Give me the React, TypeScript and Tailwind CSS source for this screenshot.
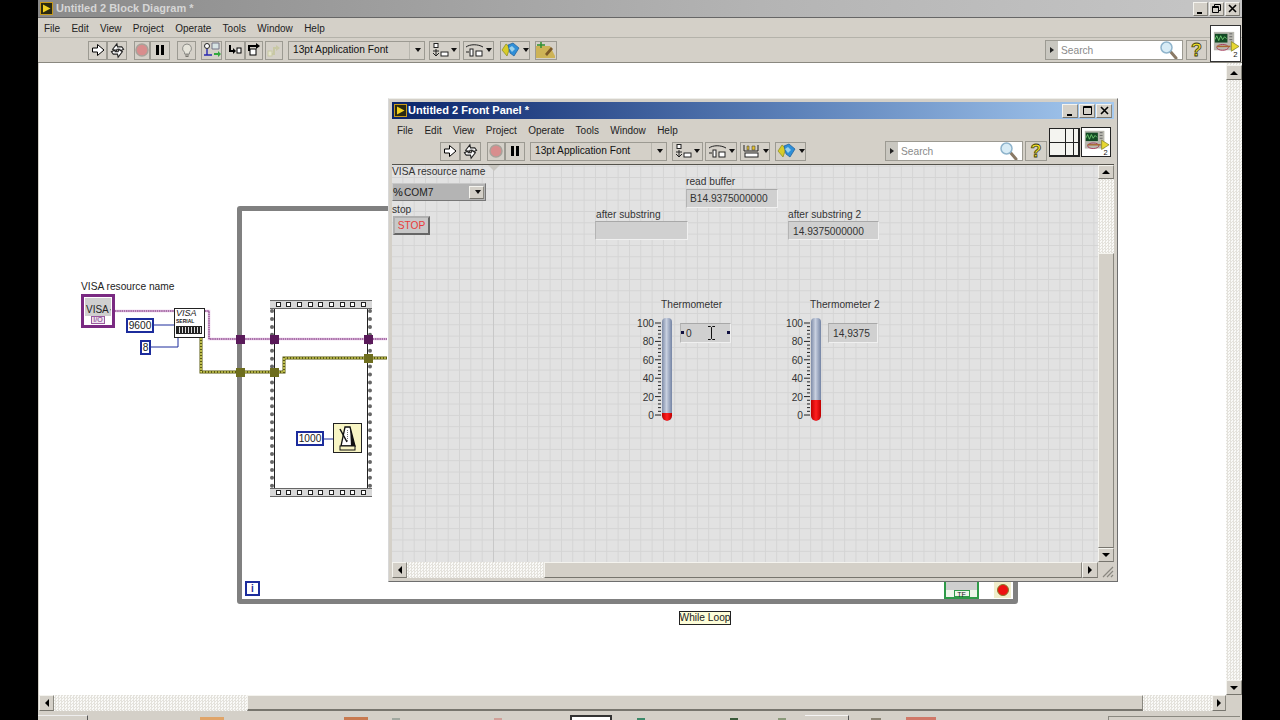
import React from "react";

const raised = "border border-t-[#f4f3ee] border-l-[#f4f3ee] border-r-[#8a8880] border-b-[#77756e] bg-[#d4d0c8]";
const sunken = "border border-t-[#a8a8a8] border-l-[#b4b4b4] border-r-[#f0f0f0] border-b-[#f0f0f0] bg-[#d0d0d0]";
const dither = "bg-[repeating-conic-gradient(#e4e2dc_0_25%,#fafaf8_0_50%)] bg-[length:3px_3px]";

function Btn({ className = "", children }: { className?: string; children?: React.ReactNode }) {
  return <div className={`h-[19px] shrink-0 flex items-center justify-center border border-[#9c9a92] bg-[#d4d0c8] ${className}`}>{children}</div>;
}

const I = ({ children, w = 14, h = 14 }: { children: React.ReactNode; w?: number; h?: number }) => (
  <svg width={w} height={h} viewBox={`0 0 ${w} ${h}`}>{children}</svg>
);

const Run = () => <I><path d="M1.500 5h5V1.500L13 7l-6.500 5.500V9h-5z" fill="#fff" stroke="#000" /></I>;
const Cycle = () => (
  <svg width="17" height="17" viewBox="0 0 14 14">
    <path d="M3 6 6.500 1.500 7 4h3.500L12 6 9 7.500V6H6.500L6 8z" fill="#fff" stroke="#222" strokeWidth=".9" />
    <path d="M11 8 7.500 12.500 7 10H3.500L2 8l3-1.500V8h2.500L8 6z" fill="#fff" stroke="#222" strokeWidth=".9" />
  </svg>
);
const Abort = () => <I><circle cx="7" cy="7" r="6" fill="#d88d8d" stroke="#a8a29a" strokeWidth="1.500" /></I>;
const Pause = () => <I><path d="M3 2h3v10H3zM8 2h3v10H8z" fill="#000" /></I>;
const Bulb = () => (
  <I>
    <path d="M7 1a4.500 4.500 0 0 0-2.500 8.200V11h5V9.200A4.500 4.500 0 0 0 7 1z" fill="#e6e4da" stroke="#8d8d88" />
    <path d="M5 12h4M5.500 13.500h3" stroke="#77756e" />
  </I>
);
const Probe = () => (
  <I w={18} h={16}>
    <circle cx="4" cy="4" r="2.500" fill="#fff" stroke="#222" />
    <path d="M9 1h7v6H9z" fill="#d8e4e4" stroke="#778" />
    <path d="M4 7v6M1 13h8" stroke="#2a2ab0" strokeWidth="1.400" />
    <path d="M11 11h4V9l3 3-3 3v-2h-4z" fill="#32a83c" />
  </I>
);
const StepIn = () => <I><path d="M2 2v6h4" fill="none" stroke="#000" strokeWidth="2" /><path d="M5 5l3 3-3 3z" fill="#000" /><rect x="9" y="5" width="4" height="5" fill="#fff" stroke="#000" /></I>;
const StepOver = () => <I><path d="M2 8V3h7" fill="none" stroke="#000" strokeWidth="2" /><path d="M9 0l4 3-4 3z" fill="#000" /><rect x="3" y="6" width="6" height="6" fill="#fff" stroke="#000" /></I>;
const StepOut = () => <I><path d="M3 11h4V5h3" fill="none" stroke="#c8c8a4" strokeWidth="2" /><path d="M9 2l4 3-4 3z" fill="#c8c8a4" /><rect x="1" y="8" width="4" height="5" fill="#e4e4cc" stroke="#c8c8a4" /></I>;
const Caret = () => <svg width="6" height="4" viewBox="0 0 6 4" className="ml-[2px]"><path d="M0 0h6L3 4z" fill="#111" /></svg>;
const Align = () => (
  <I w={17} h={15}>
    <rect x="2" y="0.500" width="4" height="4" fill="#fff" stroke="#222" />
    <path d="M4 6v6M1 8h6" stroke="#222" />
    <path d="M1 10l3 3 3-3" fill="none" stroke="#222" />
    <rect x="9" y="9" width="7" height="4" fill="#fff" stroke="#222" />
  </I>
);
const Dist = () => (
  <I w={19} h={15}>
    <path d="M1 4c4-3 12-3 17 0" fill="none" stroke="#222" />
    <rect x="5" y="6" width="3" height="7" fill="#fff" stroke="#222" />
    <rect x="11" y="8" width="6" height="5" fill="#fff" stroke="#222" />
    <path d="M1 9h3" stroke="#222" />
  </I>
);
const Resize = () => (
  <I w={19} h={15}>
    <path d="M2 1v6h14V1" fill="none" stroke="#222" />
    <path d="M5 2h2v4H5zM10 2h3v4h-3z" fill="#e6c22c" stroke="#444" strokeWidth=".6" />
    <rect x="3" y="9" width="13" height="4" fill="#fff" stroke="#222" />
  </I>
);
const Reorder = () => (
  <I w={20} h={16}>
    <path d="M1 8 5 2l4 3-3 9z" fill="#d8cc2a" stroke="#888a20" strokeWidth=".7" />
    <path d="M7 3l5-2 6 5-5 8-4-3z" fill="#2f8fd8" stroke="#1a5c98" strokeWidth=".7" />
    <path d="M8 6l3-2 3 3-3 3z" fill="#9ad0ea" />
  </I>
);
const Env = () => (
  <I w={20} h={16}>
    <path d="M0 4h14l5 10v2H0z" fill="#cdb356" />
    <path d="M1 3h8M5 0v6" stroke="#2f8f2f" strokeWidth="1.500" />
    <path d="M9 12l6-7 2 2-6 7z" fill="#7c5a28" />
  </I>
);
const Lens = () => (
  <svg width="20" height="18" viewBox="0 0 20 18">
    <path d="M11 10l6 7" stroke="#8a7a66" strokeWidth="3" strokeLinecap="round" />
    <circle cx="7.500" cy="6.500" r="5.500" fill="#d8ecf6" stroke="#8fb4cc" strokeWidth="1.500" />
  </svg>
);

function Search({ className = "" }: { className?: string }) {
  return (
    <div className={`h-[20px] w-[138px] shrink-0 flex border border-[#9c9a92] ${className}`}>
      <div className="w-[12px] flex items-center justify-center bg-[#c9c7c0]">
        <svg width="4" height="6" viewBox="0 0 4 6"><path d="M0 0l4 3-4 3z" fill="#222" /></svg>
      </div>
      <div className="flex-1 bg-white flex items-center pl-[3px] text-[#8a8a8a]">
        <span className="flex-1 pt-[2px]">Search</span>
        <Lens />
        <span className="w-[3px]" />
      </div>
    </div>
  );
}
const Help = ({ className = "" }: { className?: string }) => (
  <Btn className={`h-[20px] ${className}`}>
    <span className="font-bold text-[18px] leading-none text-[#f2e024] [-webkit-text-stroke:0.8px_#3a3a10]">?</span>
  </Btn>
);
const FontRing = () => (
  <div className="h-[19px] w-[137px] shrink-0 flex items-center border border-[#9c9a92] pl-[4px]">
    <span className="flex-1 text-[#111] pb-px">13pt Application Font</span>
    <span className="w-[15px] h-full border-l border-[#b8b6ae] flex items-center justify-center"><Caret /></span>
  </div>
);
function Menu({ className = "" }: { className?: string }) {
  return (
    <div className={`flex items-center gap-[11.3px] text-[#222] text-[10px] ${className}`}>
      {["File", "Edit", "View", "Project", "Operate", "Tools", "Window", "Help"].map((m) => <span key={m}>{m}</span>)}
    </div>
  );
}
const LvLogo = () => (
  <svg width="13" height="13" viewBox="0 0 13 13" className="shrink-0">
    <rect width="13" height="13" fill="#c79a1a" />
    <rect x="1" y="1" width="11" height="11" fill="#2a2a10" />
    <path d="M3 2.500 10.500 6.500 3 10.500z" fill="#f0d020" />
  </svg>
);
const VIcon = ({ w, h }: { w: number; h: number }) => (
  <svg width={w} height={h} viewBox="0 0 30 30">
    <rect width="30" height="30" fill="#fff" />
    <rect x="3" y="3" width="21" height="19" fill="#b8b8b0" />
    <rect x="4" y="5" width="13" height="9" fill="#124a24" />
    <path d="M4 11l2-4 2 5 2-5 2 4 2-3 2 2" fill="none" stroke="#7fe07f" strokeWidth=".8" />
    <path d="M19 5h3M19 8h3M19 11h3" stroke="#666" />
    <ellipse cx="12" cy="19" rx="6" ry="3" fill="none" stroke="#a83a5c" />
    <path d="M6 18h14" stroke="#a8662c" strokeWidth="1.500" />
    <path d="M21 13l8 5-8 5z" fill="#e8d832" stroke="#7a7a1a" strokeWidth=".7" />
    <text x="23" y="29" fontSize="8" fill="#111" fontFamily="Liberation Sans, sans-serif">2</text>
  </svg>
);
const ScrollBtn = ({ d, className = "" }: { d: string; className?: string }) => (
  <div className={`${raised} shrink-0 flex items-center justify-center ${className}`}>
    <svg width="8" height="8" viewBox="0 0 8 8"><path d={d} fill="#000" /></svg>
  </div>
);
const UP = "M0 6h8L4 2z", DOWN = "M0 2h8L4 6z", LEFT = "M6 0v8L2 4z", RIGHT = "M2 0v8l4-4z";

function Thermo({ left, value, fill, boxLeft, handles }: { left: string; value: string; fill: string; boxLeft: string; handles?: boolean }) {
  const ticks: React.ReactNode[] = [];
  for (let i = 0; i <= 25; i++) {
    const y = 6 + (i * 92) / 25;
    ticks.push(<path key={i} d={`M${i % 5 === 0 ? 0 : 3} ${y}H6`} stroke="#222" strokeWidth="1" />);
  }
  return (
    <div className={`absolute top-[152px] flex ${left}`}>
      <div className="w-[18px] h-[104px] translate-y-px flex flex-col justify-between items-end leading-[12px] text-[#333]">
        {["100", "80", "60", "40", "20", "0"].map((n) => <span key={n}>{n}</span>)}
      </div>
      <svg width="7" height="104" viewBox="0 0 7 104" className="ml-px">{ticks}</svg>
      <div className="mt-px w-[10px] h-[103px] rounded-t-[4px] rounded-b-[5px] overflow-hidden flex flex-col justify-end bg-[linear-gradient(90deg,#7e8ca8,#c8d0e0_45%,#7484a4)]">
        <div className={`${fill} rounded-b-[5px] bg-[linear-gradient(90deg,#c00000,#ff2020_50%,#c00000)]`} />
      </div>
      <div className={`relative mt-[6px] h-[20px] w-[50px] ${sunken} flex items-center ${boxLeft}`}>
        <span className="text-[#333] pt-[2px]">{value}</span>
        {handles && <span className="absolute left-0 top-[7px] w-[3px] h-[3px] bg-[#101040]" />}
        {handles && <span className="absolute right-0 top-[7px] w-[3px] h-[3px] bg-[#101040]" />}
        {handles && (
          <svg width="9" height="14" viewBox="0 0 9 14" className="absolute left-[26px] top-[2px]">
            <path d="M1 .5h2.500L4.500 1.500 5.500.5H8M4.500 1.500v11M1 13.500h2.500l1-1 1 1H8" fill="none" stroke="#111" />
          </svg>
        )}
      </div>
    </div>
  );
}

const Lbl = ({ className, children }: { className: string; children: React.ReactNode }) => (
  <span className={`absolute leading-[12px] whitespace-nowrap text-[#333] ${className}`}>{children}</span>
);

const Strip = () => (
  <div className="h-[9px] flex items-center justify-around px-[3px] border-y border-[#666] bg-[#d8d8d8]">
    {Array.from({ length: 9 }).map((_, i) => <span key={i} className="w-[5px] h-[5px] border border-[#222] bg-white" />)}
  </div>
);

function FrontPanel() {
  return (
    <div className="absolute left-[349px] top-[35px] w-[730px] h-[484px] p-[3px] flex flex-col bg-[#d4d0c8] border border-t-[#eeeeea] border-l-[#d8d8d8] border-r-[#6e6e6e] border-b-[#6e6e6e]">
      <div className="h-[17px] shrink-0 flex items-center pl-[2px] text-[11px] bg-[linear-gradient(90deg,#0a246a,#5b80b8_55%,#a6caf0)]">
        <LvLogo />
        <span className="ml-px font-bold text-white">Untitled 2 Front Panel *</span>
        <div className="ml-auto flex gap-px pr-[2px]">
          {[
            <path key="a" d="M2 9h5v2H2z" fill="#000" />,
            <path key="b" d="M1.500 1.500h8v8h-8zM1.500 2.500h8" fill="none" stroke="#000" />,
            <path key="c" d="M2 2l7 7M9 2l-7 7" stroke="#000" strokeWidth="1.600" />,
          ].map((p, i) => (
            <div key={i} className={`${raised} w-[16px] h-[14px] flex items-center justify-center`}>
              <svg width="11" height="11" viewBox="0 0 11 11">{p}</svg>
            </div>
          ))}
        </div>
      </div>
      <Menu className="h-[21px] shrink-0 pl-[5px] pt-[2px]" />
      <div className="relative h-[25px] shrink-0 flex items-center pl-[48px] pb-[2px] border-b border-[#55534c]">
        <Btn className="w-[20px]"><Run /></Btn>
        <Btn className="w-[21px]"><Cycle /></Btn>
        <Btn className="w-[18px] ml-[6px]"><Abort /></Btn>
        <Btn className="w-[20px]"><Pause /></Btn>
        <div className="ml-[5px]"><FontRing /></div>
        <Btn className="w-[31px] ml-[5px]"><Align /><Caret /></Btn>
        <Btn className="w-[32px] ml-[2px]"><Dist /><Caret /></Btn>
        <Btn className="w-[30px] ml-[3px]"><Resize /><Caret /></Btn>
        <Btn className="w-[31px] ml-[5px]"><Reorder /><Caret /></Btn>
        <Search className="ml-[79px]" />
        <Help className="w-[22px] ml-[2px]" />
        <div className="absolute left-[657px] top-[-12px] w-[31px] h-[29px] bg-[#f4f4f0] border border-[#222] grid grid-cols-[16px_8px_1fr] grid-rows-2">
          {Array.from({ length: 6 }).map((_, i) => <span key={i} className="border-r border-b border-[#222]" />)}
        </div>
        <div className="absolute left-[689px] top-[-13px] w-[30px] h-[30px] border border-[#222]"><VIcon w={28} h={28} /></div>
      </div>
      <div className="h-[397px] shrink-0 flex">
        <div className="relative w-[706px] bg-[#e2e2e2] bg-[linear-gradient(#d4d4d4_1px,transparent_1px),linear-gradient(90deg,#d4d4d4_1px,transparent_1px)] bg-[length:11.33px_11.33px] bg-[position:10.4px_0.7px]">
          <div className="absolute left-[101px] top-0 bottom-0 w-px bg-[#c8c8c8]" />
          <svg width="12" height="6" viewBox="0 0 12 6" className="absolute left-[96px] top-0"><path d="M0 0h12L6 6z" fill="#c8c6c0" /></svg>
          <Lbl className="left-0 top-px">VISA resource name</Lbl>
          <div className="absolute left-0 top-[18px] w-[94px] h-[18px] flex items-center bg-[#b4b4b4] border border-t-[#c8c8c8] border-l-[#cccccc] border-r-[#777] border-b-[#777]">
            <span className="w-[11px] text-[11px] leading-none text-[#111]">%</span>
            <span className="flex-1 text-[#222] pt-[2px]">COM7</span>
            <span className={`${raised} w-[15px] h-[13px] mr-px flex items-center justify-center`}><Caret /></span>
          </div>
          <Lbl className="left-0 top-[39px]">stop</Lbl>
          <div className="absolute left-px top-[51px] w-[37px] h-[19px] flex items-center justify-center bg-[#c8c8c8] border-2 border-t-[#b0b0b0] border-l-[#b0b0b0] border-r-[#666] border-b-[#666] text-[#e83a3a]">STOP</div>
          <Lbl className="left-[294px] top-[11px]">read buffer</Lbl>
          <div className={`absolute left-[294px] top-[24px] w-[92px] h-[19px] ${sunken} flex items-center pl-[3px] text-[#333]`}>B14.9375000000</div>
          <Lbl className="left-[204px] top-[44px]">after substring</Lbl>
          <div className={`absolute left-[203px] top-[56px] w-[93px] h-[19px] ${sunken}`} />
          <Lbl className="left-[396px] top-[44px]">after substring 2</Lbl>
          <div className={`absolute left-[396px] top-[56px] w-[91px] h-[19px] ${sunken} flex items-center pl-[4px] pt-[2px] text-[#333]`}>14.9375000000</div>
          <Lbl className="left-[269px] top-[134px]">Thermometer</Lbl>
          <Lbl className="left-[418px] top-[134px]">Thermometer 2</Lbl>
          <Thermo left="left-[244px]" value="0" fill="h-[8px]" boxLeft="ml-[8px] w-[51px] pl-[5px]" handles />
          <Thermo left="left-[393px]" value="14,9375" fill="h-[21px]" boxLeft="ml-[7px] pl-[4px]" />
        </div>
        <div className={`w-[16px] flex flex-col ${dither}`}>
          <ScrollBtn d={UP} className="h-[14px]" />
          <div className="h-[74px]" />
          <div className={`flex-1 ${raised}`} />
          <ScrollBtn d={DOWN} className="h-[14px]" />
        </div>
      </div>
      <div className="h-[16px] shrink-0 flex">
        <ScrollBtn d={LEFT} className="w-[15px]" />
        <div className={`w-[137px] ${dither}`} />
        <div className={`w-[538px] ${raised}`} />
        <ScrollBtn d={RIGHT} className="w-[16px]" />
        <div className="flex-1 bg-[#d4d0c8] flex items-end justify-end">
          <svg width="14" height="14" viewBox="0 0 14 14"><path d="M13 3 3 13M13 7l-6 6M13 11l-2 2" stroke="#8a8880" strokeWidth="1.200" /></svg>
        </div>
      </div>
    </div>
  );
}

function Diagram() {
  return (
    <div className="relative flex-1 bg-white overflow-hidden text-[#222]">
      <div className="absolute left-[198px] top-[143px] w-[781px] h-[398px] border-[5px] border-[#808080] rounded-[3px]" />
      <div className="absolute left-[231px] top-[237px] w-[102px] h-[197px] flex flex-col">
        <Strip />
        <div className="flex-1 border-x-[4px] border-dotted border-x-[#666]"><div className="h-full border-x border-[#222]" /></div>
        <Strip />
      </div>

      <span className="absolute left-[42px] top-[218px] leading-[12px] whitespace-nowrap">VISA resource name</span>
      <div className="absolute left-[42px] top-[231px] w-[34px] h-[34px] border-[3px] border-[#7a2a82] bg-white p-px flex flex-col">
        <div className="flex-1 bg-[#cfcfcf] flex items-center text-[10px] leading-none pt-[5px] pl-px whitespace-nowrap">VISA<svg width="4" height="4" viewBox="0 0 6 4" className="ml-px"><path d="M0 0h6L3 4z" fill="#111" /></svg></div>
        <div className="h-[8px] mx-[6px] border border-[#9a5aa0] bg-[#efe4f0] text-[7px] leading-[6px] text-center text-[#7a2a82]">I/O</div>
      </div>
      <div className="absolute left-[87px] top-[255px] w-[28px] h-[15px] pt-[2px] border-2 border-[#1c2c9c] bg-white flex items-center justify-center leading-none">9600</div>
      <div className="absolute left-[101px] top-[277px] w-[11px] h-[15px] pt-[2px] border-2 border-[#1c2c9c] bg-white flex items-center justify-center leading-none">8</div>
      <div className="absolute left-[135px] top-[245px] w-[31px] h-[30px] border border-[#222] bg-white flex flex-col pl-px">
        <span className="italic text-[9px] leading-[9px] text-[#222]">VISA</span>
        <span className="font-bold text-[5px] leading-[6px] text-[#222]">SERIAL</span>
        <span className="mt-[2px] mr-[2px] h-[8px] border border-[#222] bg-[repeating-linear-gradient(90deg,#222_0_2px,#ddd_2px_3px)]" />
      </div>
      <div className="absolute left-[257px] top-[368px] w-[28px] h-[15px] pt-[2px] border-2 border-[#1c2c9c] bg-white flex items-center justify-center leading-none">1000</div>
      <div className="absolute left-[294px] top-[360px] w-[29px] h-[30px] border border-[#222] bg-[#f8f5c4] flex items-center justify-center">
        <svg width="20" height="25" viewBox="0 0 20 25">
          <path d="M7 1h5l5 19H3z" fill="#fff" stroke="#111" strokeWidth="1.300" />
          <path d="M12 1l5 19h-4z" fill="#111" />
          <path d="M2 3l7 13" stroke="#111" strokeWidth="1.500" />
          <path d="M9.500 4v12" stroke="#777" strokeDasharray="1 1" />
          <rect x="2" y="20" width="15" height="4" fill="#f8f5c4" stroke="#111" />
        </svg>
      </div>
      <div className="absolute left-[206px] top-[518px] w-[15px] h-[15px] border-2 border-[#1c2c9c] bg-white flex items-center justify-center font-bold text-[10px] text-[#1c2c9c] leading-none">i</div>
      <div className="absolute left-[905px] top-[515px] w-[35px] h-[21px] border-2 border-[#2e9a48] bg-[#eef6ea] flex flex-col items-center justify-end">
        <span className="w-full flex-1 bg-[#cfcfcf]" />
        <span className="w-[16px] h-[7px] text-[7px] leading-[7px] text-center border border-[#2e9a48] text-[#222]">TF</span>
      </div>
      <div className="absolute left-[955px] top-[518px] w-[17px] h-[17px] bg-[#f0eecc] flex items-center justify-center">
        <span className="w-[12px] h-[12px] rounded-full bg-[#ee1111] border border-[#8a7a2a]" />
      </div>
      <div className="absolute left-[640px] top-[548px] w-[52px] h-[14px] pt-px border border-[#222] bg-[#fdfdd8] flex items-center justify-center leading-none whitespace-nowrap">While Loop</div>

      <svg width="1187" height="632" viewBox="39 63 1187 632" className="absolute left-0 top-0 pointer-events-none" fill="none">
        <path d="M115 311H174M205 311H209V339H387" stroke="#e8c8e8" strokeWidth="2.500" />
        <path d="M115 311H174M205 311H209V339H387" stroke="#6a1a6a" strokeDasharray="1.500 .7" />
        <path d="M154 325H174M151 347H178V338M324 439H333" stroke="#1c2c9c" />
        <path d="M201 338V372H284V358H387" stroke="#5a5a10" strokeWidth="3" />
        <path d="M201 338V372H284V358H387" stroke="#f8f870" strokeWidth="1.200" strokeDasharray="2 1" />
        <path d="M236 335h9v9h-9zM270 335h9v9h-9zM364 335h9v9h-9z" fill="#5a1a5a" />
        <path d="M236 368h9v9h-9zM270 368h9v9h-9zM364 354h9v9h-9z" fill="#6e6e1e" />
      </svg>
      <FrontPanel />
    </div>
  );
}

export default function App() {
  return (
    <div className="w-[1280px] h-[720px] bg-black overflow-hidden px-[38px] font-['Liberation_Sans',sans-serif] text-[10.2px]">
      <div className="relative h-full flex flex-col bg-[#d4d0c8]">
        <div className="h-[18px] shrink-0 flex items-center pl-[2px] border-b border-[#666] text-[11px] bg-[linear-gradient(90deg,#8a8a8a,#b4b4b4_60%,#c6c6c6)]">
          <LvLogo />
          <span className="ml-[3px] font-bold text-[#d6d6d6]">Untitled 2 Block Diagram *</span>
          <div className="ml-auto flex gap-px pr-[2px]">
            {[
              <path key="a" d="M2 9h5v2H2z" fill="#000" />,
              <path key="b" d="M3.500 3.500V1.500h6v6h-2M1.500 3.500h6v6h-6zM1.500 4.500h6" fill="none" stroke="#000" />,
              <path key="c" d="M2 2l7 7M9 2l-7 7" stroke="#000" strokeWidth="1.600" />,
            ].map((p, i) => (
              <div key={i} className={`${raised} w-[15px] h-[14px] flex items-center justify-center`}>
                <svg width="11" height="11" viewBox="0 0 11 11">{p}</svg>
              </div>
            ))}
          </div>
        </div>
        <Menu className="h-[20px] shrink-0 pl-[6px] pt-[2px] border-b border-[#b4b2aa]" />
        <div className="h-[25px] shrink-0 flex items-center pl-[50px] border-b border-[#8a8880]">
          <Btn className="w-[19px]"><Run /></Btn>
          <Btn className="w-[20px]"><Cycle /></Btn>
          <Btn className="w-[16px] ml-[7px]"><Abort /></Btn>
          <Btn className="w-[20px]"><Pause /></Btn>
          <Btn className="w-[19px] ml-[7px]"><Bulb /></Btn>
          <Btn className="w-[21px] ml-[5px] bg-[#c4ccd8]"><Probe /></Btn>
          <Btn className="w-[20px] ml-[3px]"><StepIn /></Btn>
          <Btn className="w-[18px]"><StepOver /></Btn>
          <Btn className="w-[18px] ml-[2px]"><StepOut /></Btn>
          <div className="ml-[5px]"><FontRing /></div>
          <Btn className="w-[31px] ml-[4px]"><Align /><Caret /></Btn>
          <Btn className="w-[31px] ml-[3px]"><Dist /><Caret /></Btn>
          <Btn className="w-[30px] ml-[6px]"><Reorder /><Caret /></Btn>
          <Btn className="w-[22px] ml-[5px]"><Env /></Btn>
          <Search className="ml-[488px]" />
          <Help className="w-[21px] ml-[3px]" />
        </div>
        <div className="absolute left-[1172px] top-[25px] w-[31px] h-[37px] border border-[#333] bg-white flex items-center justify-center">
          <VIcon w={29} h={29} />
        </div>
        <div className="h-[632px] shrink-0 flex pl-px">
          <Diagram />
          <div className={`w-[16px] flex flex-col justify-between ${dither}`}>
            <ScrollBtn d={UP} className="h-[15px] mt-[2px]" />
            <ScrollBtn d={DOWN} className="h-[15px]" />
          </div>
        </div>
        <div className="h-[16px] shrink-0 flex pl-px">
          <ScrollBtn d={LEFT} className="w-[15px]" />
          <div className={`w-[193px] ${dither}`} />
          <div className={`w-[896px] ${raised} border-b-2`} />
          <div className={`w-[69px] ${dither}`} />
          <ScrollBtn d={RIGHT} className="w-[14px]" />
        </div>
        <div className="relative h-[9px] shrink-0 flex items-end">
          <span className="absolute left-0 top-[4px] w-[50px] h-[5px] border-t border-r border-[#eee] border-r-[#555]" />
          <span className="absolute left-[162px] top-[6px] w-[24px] h-[3px] bg-[#e0a468]" />
          <span className="absolute left-[306px] top-[6px] w-[24px] h-[3px] bg-[#c87a50]" />
          <span className="absolute left-[354px] top-[7px] w-[8px] h-[2px] bg-[#a0a8a0]" />
          <span className="absolute left-[456px] top-[7px] w-[8px] h-[2px] bg-[#d0a098]" />
          <span className="absolute left-[532px] top-[4px] w-[42px] h-[5px] border-t-2 border-x-2 border-[#333] bg-white" />
          <span className="absolute left-[599px] top-[7px] w-[8px] h-[2px] bg-[#3c8a6a]" />
          <span className="absolute left-[692px] top-[7px] w-[8px] h-[2px] bg-[#3a5a3a]" />
          <span className="absolute left-[740px] top-[7px] w-[8px] h-[2px] bg-[#8a9a7a]" />
          <span className="absolute left-[767px] top-[4px] w-[44px] h-[5px] border-t border-[#f4f4f4] border-r border-r-[#555]" />
          <span className="absolute left-[833px] top-[7px] w-[10px] h-[2px] bg-[#8a8474]" />
          <span className="absolute left-[868px] top-[6px] w-[30px] h-[3px] bg-[#d07868]" />
          <span className="absolute left-[1070px] top-[5px] w-[132px] h-[4px] border-t border-l border-[#8a8880]" />
        </div>
      </div>
    </div>
  );
}
